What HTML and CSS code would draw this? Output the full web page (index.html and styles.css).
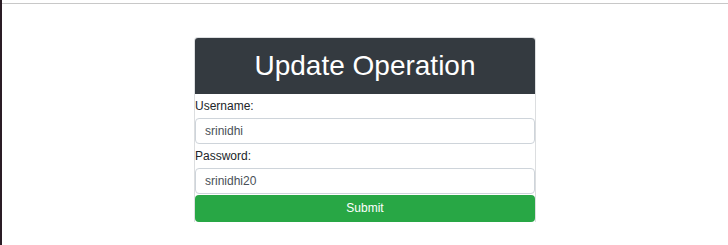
FILE: index.html
```html
<!DOCTYPE html>
<html lang="en">
<head>
<meta charset="utf-8">
<title>Update Operation</title>
<link rel="stylesheet" href="styles.css">
</head>
<body>
<div class="topbar"></div>
<div class="card">
  <div class="card-header">Update Operation</div>
  <form class="form">
    <label class="label" for="username">Username:</label>
    <input class="input" id="username" type="text" value="srinidhi">
    <label class="label" for="password">Password:</label>
    <input class="input" id="password" type="text" value="srinidhi20">
    <button class="submit" type="button">Submit</button>
  </form>
</div>
</body>
</html>
```

FILE: styles.css
```css
html, body {
  margin: 0;
  padding: 0;
  background: #ffffff;
}
body {
  font-family: "Liberation Sans", Arial, sans-serif;
  border-left: 2px solid #2a1c25;
  min-height: 245px;
  box-sizing: border-box;
}
.topbar {
  height: 3px;
  border-bottom: 1px solid #c8c8c8;
}
.card {
  width: 342px;
  margin: 33px auto 0;
  border: 1px solid #dcdee0;
  border-bottom: none;
  border-radius: 4px 4px 0 0;
  box-sizing: border-box;
}
.card-header {
  background: #343a40;
  color: #ffffff;
  height: 56px;
  display: flex;
  align-items: center;
  justify-content: center;
  font-size: 28px;
  border-radius: 3px 3px 0 0;
}
.form {
  margin: 0;
  display: flex;
  flex-direction: column;
}
.label {
  display: block;
  font-size: 12px;
  line-height: 14px;
  padding: 4.5px 0 5.5px;
  color: #212529;
}
.input {
  display: block;
  width: 100%;
  height: 26px;
  margin: 0;
  border: 1px solid #ced4da;
  border-radius: 4px;
  padding: 0 9px;
  font-family: "Liberation Sans", Arial, sans-serif;
  font-size: 12px;
  color: #495057;
  box-sizing: border-box;
  background: #ffffff;
}
.submit {
  display: block;
  width: 100%;
  height: 27.5px;
  margin: 0.5px 0 0;
  border: none;
  border-radius: 4px;
  background: #28a745;
  color: #ffffff;
  font-family: "Liberation Sans", Arial, sans-serif;
  font-size: 12px;
  padding: 0;
}
```
